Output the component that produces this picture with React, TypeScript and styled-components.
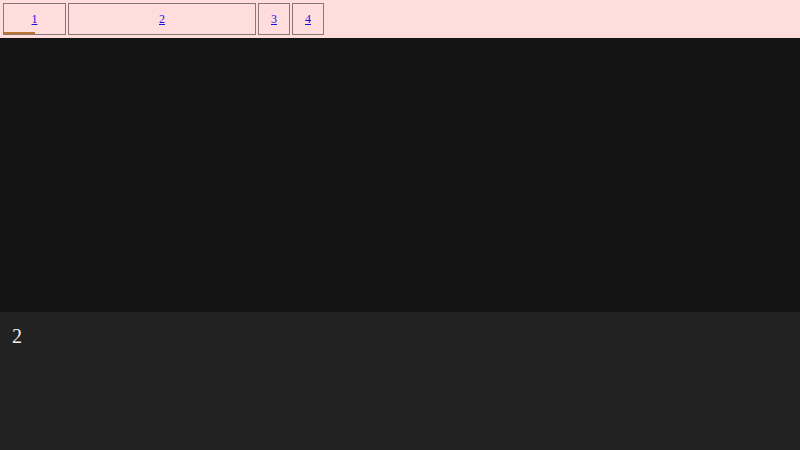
import * as React from "react";
import styled, { createGlobalStyle } from "styled-components";

const GlobalStyle = createGlobalStyle`
  html, body {
    margin: 0;
    padding: 0;
    background: #222222;
  }
  body {
    font-family: "Liberation Serif", "Times New Roman", serif;
  }
`;

const Page = styled.div`
  display: flex;
  flex-direction: column;
  width: 800px;
  height: 450px;
`;

const TabBar = styled.nav`
  display: flex;
  gap: 2px;
  padding: 3px;
  height: 32px;
  background-color: #ffdddd;
`;

const Tab = styled.div<{ $width: number }>`
  position: relative;
  box-sizing: border-box;
  display: flex;
  align-items: center;
  justify-content: center;
  width: ${(p) => p.$width}px;
  height: 32px;
  border: 1px solid #8a7878;
  font-size: 12px;

  a {
    color: #1a0ee0;
  }
`;

const Progress = styled.div`
  position: absolute;
  left: 0;
  bottom: 0;
  height: 2px;
  background-color: #b8762f;
`;

const Stage = styled.div`
  height: 274px;
  background-color: #141414;
`;

const Caption = styled.div`
  flex: 1;
  padding: 13px 12px;
  background-color: #222222;
  color: #f2f2f2;
  font-size: 20px;
`;

const tabs = [
  { label: "1", width: 63 },
  { label: "2", width: 188 },
  { label: "3", width: 32 },
  { label: "4", width: 32 },
];

export default function App() {
  return (
    <Page>
      <GlobalStyle />
      <TabBar>
        {tabs.map((t, i) => (
          <Tab key={t.label} $width={t.width}>
            <a href="#">{t.label}</a>
            {i === 0 && <Progress style={{ width: "50%" }} />}
          </Tab>
        ))}
      </TabBar>
      <Stage />
      <Caption>2</Caption>
    </Page>
  );
}
